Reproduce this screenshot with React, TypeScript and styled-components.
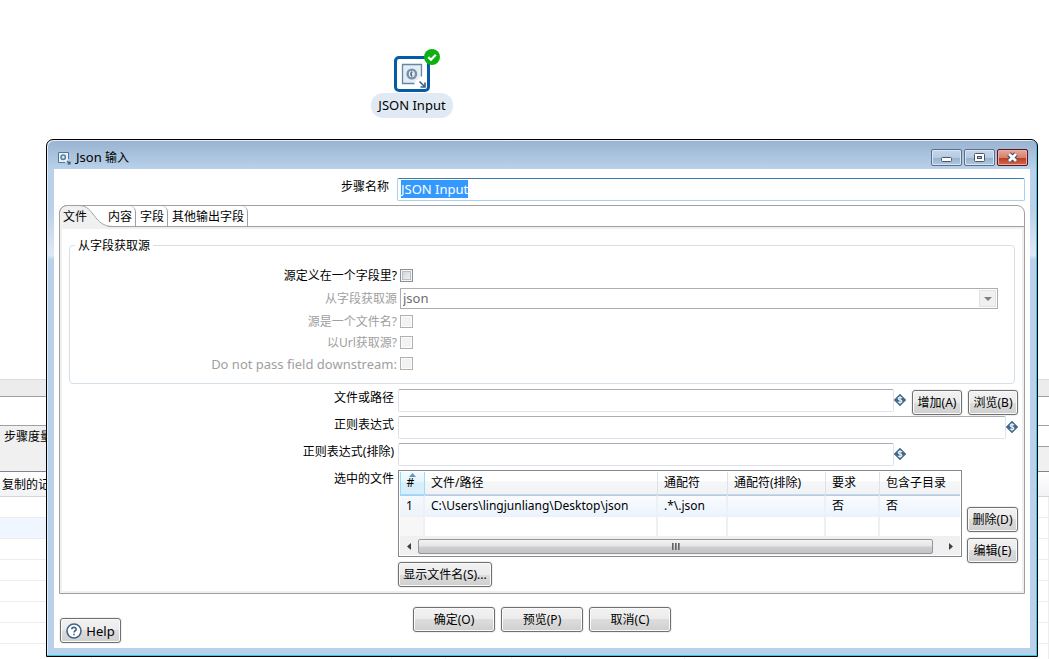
import React, { useEffect, useRef } from "react";
import styled, { createGlobalStyle, css } from "styled-components";

const GlobalStyle = createGlobalStyle`
  *, *::before, *::after { box-sizing: border-box; }
  body {
    margin: 0;
    background: #fff;
    color: #000;
    font-family: "Noto Sans", "Noto Sans CJK SC", sans-serif;
    font-size: 12px;
    line-height: 18px;
  }
  button, input, select { font: inherit; color: inherit; margin: 0; }
`;

const latin = css`
  font-size: 13px;
`;

const Desktop = styled.div`
  position: relative;
  min-height: 100vh;
  overflow: hidden;
`;

/* ---------- transformation canvas and results pane ---------- */

const Canvas = styled.div`
  position: relative;
  height: 379px;
`;

const StepNode = styled.div`
  position: absolute;
  left: 371px;
  top: 56px;
  width: 82px;
  display: flex;
  flex-direction: column;
  align-items: center;
  gap: 1px;
`;

const StepIcon = styled.div`
  position: relative;
  width: 36px;
  height: 36px;
  border: 3px solid #055ca6;
  border-radius: 5px;
  background: #fff;
  svg { display: block; }
`;

const StepBadge = styled.span`
  position: absolute;
  right: -13px;
  top: -10px;
`;

const StepLabel = styled.div`
  ${latin}
  width: 100%;
  height: 25px;
  line-height: 25px;
  text-align: center;
  white-space: nowrap;
  border-radius: 12px;
  background: #e1eaf4;
`;

const ResultsBar = styled.div`
  height: 18px;
  background: #ececec;
  border-top: 1px solid #dcdcdc;
  border-bottom: 1px solid #a0a0a0;
`;

const ResultsGap = styled.div`
  height: 28px;
`;

const MetricTabs = styled.div`
  display: flex;
  height: 47px;
  border-top: 1px solid #a0a0a0;
  border-bottom: 1px solid #83838f;
`;

const MetricTab = styled.div`
  width: 60px;
  padding: 2px 4px;
  background: #f0f0f0;
  white-space: nowrap;
`;

const MetricRest = styled.div`
  flex: 1;
  margin-top: 20px;
  background: #f0f0f0;
  border-top: 1px solid #a0a0a0;
`;

const MetricTable = styled.table`
  width: 100%;
  table-layout: fixed;
  border-collapse: separate;
  border-spacing: 0;
  th {
    height: 25px;
    padding: 1px 2px 0;
    text-align: left;
    font-weight: 400;
    white-space: nowrap;
    background: linear-gradient(#fff, #f2f3f5);
    border-bottom: 1px solid #d5d5d5;
  }
  td {
    height: 21px;
    padding: 0;
    border-bottom: 1px solid #ededed;
    border-right: 1px solid #ededed;
  }
  tr:nth-child(2) td:not(:last-child) { background: #eff6ff; }
`;

/* ---------- dialog window ---------- */

const Window = styled.section`
  position: absolute;
  left: 46px;
  right: 11px;
  top: 139px;
  border: 1px solid #000;
  border-radius: 7px 7px 0 0;
  box-shadow: inset -1px -1px 0 #2fc8e6, inset 1px 1px 0 #e3edf7;
  padding: 0 7px 8px;
  background: linear-gradient(
    #98b3d0 0, #b9d1ea 29px, #b9d1ea 70px, #dfe9f5 115px, #b9d1ea 120px, #b9d1ea 100%
  );
`;

const TitleBar = styled.header`
  display: flex;
  align-items: center;
  height: 29px;
  padding: 0 2px 0 3px;
`;

const Title = styled.h1`
  ${latin}
  flex: 1;
  margin: 0 0 0 5px;
  font-weight: 400;
  padding-top: 6px;
  span { font-size: 12px; }
`;

const TitleIcon = styled.span`
  display: flex;
  padding-top: 6px;
`;

const WindowControls = styled.div`
  display: flex;
  gap: 2px;
  padding-top: 6px;
`;

const ControlButton = styled.button<{ $close?: boolean }>`
  display: flex;
  align-items: center;
  justify-content: center;
  width: 31px;
  height: 17px;
  padding: 0;
  border: 1px solid ${p => (p.$close ? "#5a1420" : "#5d6f87")};
  border-radius: 2px;
  box-shadow: inset 0 0 0 1px ${p => (p.$close ? "#e9aea3" : "#d8e5f3")};
  background: ${p =>
    p.$close
      ? "linear-gradient(#e5a99c 0, #d6806f 50%, #bb3a20 50%, #cf6a50 100%)"
      : "linear-gradient(#c3d5e9 0, #b6cbe3 50%, #95b0cc 50%, #b0c8e0 100%)"};
`;

const Client = styled.div`
  background: #fff;
`;

const NameRow = styled.div`
  display: flex;
  align-items: flex-start;
  padding: 9px 5px 4px 0;
`;

const NameLabel = styled.label`
  width: 335px;
  margin-right: 8px;
  text-align: right;
`;

const TextField = styled.input`
  ${latin}
  flex: 1;
  min-width: 0;
  height: 23px;
  padding: 0 3px;
  border: 1px solid #dfe2ea;
  border-top-color: #abadb3;
  border-radius: 2px;
  outline: none;
  background: #fff;
`;

const NameField = styled(TextField)`
  padding-bottom: 1px;
  border-color: #a9d0ec;
  border-top-color: #3d7bad;
  &::selection { background: #3399ff; color: #fff; }
`;

const Folder = styled.div`
  margin: 0 5px;
  border: 1px solid #a0a0a0;
  border-radius: 8px 8px 0 0;
`;

const TabStrip = styled.div`
  position: relative;
  display: flex;
  height: 21px;
  border-bottom: 1px solid #a0a0a0;
`;

const ActiveTabShape = styled.svg`
  position: absolute;
  left: -1px;
  top: -1px;
`;

const Tab = styled.button<{ $active?: boolean }>`
  position: relative;
  height: 20px;
  padding: ${p => (p.$active ? "1px 17px 0 3px" : "1px 3px 0 4px")};
  border: 0;
  border-right: ${p => (p.$active ? "0" : "1px solid #a0a0a0")};
  border-top-right-radius: ${p => (p.$active ? "0" : "6px")};
  background: none;
  line-height: 20px;
  white-space: nowrap;
`;

const Panel = styled.div`
  border: 2px solid #f0f0f0;
  padding: 6px 4px 4px 7px;
`;

const Group = styled.fieldset`
  margin: 0 3px 5px 0;
  padding: 10px 16px 9px 0;
  border: 1px solid #d5dfe8;
  border-radius: 4px;
  min-width: 0;
  legend {
    margin-left: 5px;
    padding: 2px 3px 0;
  }
`;

const SourceRow = styled.div<{ $disabled?: boolean; $gap?: boolean }>`
  display: flex;
  align-items: center;
  gap: 3px;
  height: 21px;
  margin-bottom: ${p => (p.$gap ? "2px" : "0")};
  color: ${p => (p.$disabled ? "#a0a0a0" : "#000")};
`;

const SourceLabel = styled.label<{ $latin?: boolean }>`
  ${p => p.$latin && latin}
  width: 327px;
  text-align: right;
  white-space: nowrap;
`;

const CheckBox = styled.input.attrs({ type: "checkbox" })`
  appearance: none;
  width: 13px;
  height: 13px;
  border: 1px solid #8e8f8f;
  box-shadow: inset 0 0 0 1px #f4f4f4, inset 0 0 0 2px #b9bfc8;
  background: linear-gradient(135deg, #cbcfd5, #f6f6f6);
  &:disabled {
    border-color: #b1b1b1;
    box-shadow: inset 0 0 0 1px #fbfbfb;
    background: #f2f2f2;
  }
`;

const Combo = styled.div`
  display: flex;
  flex: 1;
  height: 21px;
  padding: 1px;
  border: 1px solid #aeadb3;
  background: #fff;
`;

const ComboSelect = styled.select`
  ${latin}
  flex: 1;
  appearance: none;
  padding: 0 1px;
  border: 0;
  background: none;
  line-height: 17px;
  &:disabled { color: #6d6d6d; opacity: 1; }
`;

const ComboArrow = styled.span`
  display: flex;
  align-items: center;
  justify-content: center;
  width: 17px;
  background: #f0f0f0;
  border: 1px solid #e2e2e2;
`;

const FieldRow = styled.div`
  display: flex;
  align-items: flex-start;
  min-height: 27px;
`;

const FieldLabel = styled.label`
  width: 325px;
  margin-right: 4px;
  text-align: right;
  white-space: nowrap;
`;

const VariableMark = styled.svg`
  flex: none;
  margin-top: 5px;
`;

const FieldButtons = styled.div`
  display: flex;
  gap: 6px;
  width: 112px;
  padding: 1px 0 0 6px;
`;

const PushButton = styled.button<{ $width: number }>`
  display: flex;
  align-items: center;
  justify-content: center;
  gap: 4px;
  width: ${p => p.$width}px;
  height: 25px;
  padding: 0;
  border: 1px solid #707070;
  border-radius: 3px;
  box-shadow: 0 0 0 1px #f0f0f0, inset 0 0 0 1px #fafafa;
  background: linear-gradient(#f2f2f2 0, #ebebeb 50%, #dddddd 50%, #cfcfcf 100%);
  white-space: nowrap;
`;

const HelpButton = styled(PushButton)`
  ${latin}
`;

const FilesColumn = styled.div`
  flex: 1;
  min-width: 0;
`;

const TableFrame = styled.div`
  height: 87px;
  margin-bottom: 5px;
  padding: 1px;
  border: 1px solid #828790;
`;

const FilesTable = styled.table`
  width: 100%;
  table-layout: fixed;
  border-collapse: separate;
  border-spacing: 0;
  th, td {
    padding: 0 6px;
    text-align: left;
    font-weight: 400;
    white-space: nowrap;
    overflow: hidden;
  }
  th {
    height: 23px;
    background: linear-gradient(#fff 0, #fff 40%, #f5f6f8 45%, #f1f2f4 100%);
    border-right: 1px solid #e0e2e6;
    border-bottom: 1px solid #d5d5d5;
  }
  td {
    border-right: 2px solid #edf0f5;
    border-bottom: 1px solid #f0f0f0;
  }
  th:last-child, td:last-child { border-right: 0; }
`;

const SortHeader = styled.th`
  && {
    position: relative;
    text-align: center;
    padding: 0 4px 0 0;
    background: linear-gradient(#f2fbff 0, #e6f6fd 45%, #d6eefa 50%, #d9f0fb 100%);
    border: 1px solid #9bdcf7;
    border-top: 0;
  }
  svg { position: absolute; left: 8px; top: 1px; }
`;

const FileRow = styled.tr<{ $selected?: boolean }>`
  td {
    height: ${p => (p.$selected ? "22px" : "20px")};
    ${p =>
      p.$selected &&
      css`
        border-top: 1px solid #a9cdf5;
        background: linear-gradient(#fafcff, #eaf3fd);
      `}
  }
  td:first-child {
    padding: 0 6px;
    background: ${p => (p.$selected ? "linear-gradient(#f6f9fd, #edf3fa)" : "#f7f7f7")};
  }
`;

const ScrollBar = styled.div`
  display: flex;
  align-items: center;
  height: 18px;
  background: #f0f0f0;
`;

const ScrollArrow = styled.span<{ $width: number }>`
  display: flex;
  justify-content: center;
  width: ${p => p.$width}px;
`;

const ScrollThumb = styled.div`
  display: flex;
  align-items: center;
  justify-content: center;
  gap: 1px;
  flex: 1;
  height: 15px;
  margin-right: 9px;
  border: 1px solid #979797;
  border-radius: 2px;
  background: linear-gradient(#f3f3f3 0, #e4e4e6 48%, #cfcfd2 52%, #c3c3c8 100%);
  i {
    width: 2px;
    height: 7px;
    background: linear-gradient(90deg, #4e4e52, #a5a5aa);
  }
`;

const SideButtons = styled.div`
  display: flex;
  flex-direction: column;
  gap: 6px;
  padding: 37px 0 0 5px;
`;

const Footer = styled.footer`
  display: grid;
  grid-template-columns: 1fr auto 1fr;
  padding: 13px 6px 5px;
`;

const HelpCell = styled.div`
  padding-top: 11px;
`;

const Actions = styled.div`
  display: flex;
  align-items: flex-start;
  gap: 6px;
`;

/* ---------- drawings ---------- */

const JsonGlyph = () => (
  <svg width="30" height="30" viewBox="0 0 30 30" fill="none" aria-hidden="true">
    <path d="M6 6H24V17L17 24H6Z" fill="#e3edf6" />
    <path d="M24.5 17.5V5.5H5.5V24.5H17.5" stroke="#6486a3" strokeWidth="1.3" />
    <ellipse cx="14.8" cy="15" rx="4.2" ry="4.4" stroke="#7b90a6" strokeWidth="2.4" />
    <path d="M15.2 12.6c-1.6 1.2-1.6 3.6 0 4.8" stroke="#4e6a86" strokeWidth="1.6" />
    <path d="M22.5 22.5l5 5M28 23.5V28H23.5" stroke="#3f6280" strokeWidth="1.6" />
  </svg>
);

const JsonGlyphSmall = () => (
  <svg width="14" height="14" viewBox="0 0 14 14" fill="none" aria-hidden="true">
    <rect x="1" y="1" width="10" height="10" fill="#eaf2f9" />
    <path d="M11.5 8V1.5H1.5V11.5H8" stroke="#4f7696" />
    <circle cx="6.2" cy="6.2" r="2.2" fill="#dbe6f0" stroke="#5d7c98" strokeWidth="1.5" />
    <path d="M10 10L13 13M13 10.5V13H10.5" stroke="#3a6080" strokeWidth="1.2" />
  </svg>
);

const VariableIcon = () => (
  <VariableMark width="12" height="12" viewBox="0 0 12 12" aria-hidden="true">
    <path d="M6 0L12 6L6 12L0 6Z" fill="#41698c" stroke="#41698c" strokeWidth=".5" />
    <path
      d="M8 4.2C7.4 3.1 4.2 2.9 4.2 4.6C4.2 6.3 7.9 5.6 7.9 7.4C7.9 9.1 4.6 8.9 3.9 7.8M6 2V10"
      fill="none"
      stroke="#e6eef5"
      strokeWidth="1.2"
    />
  </VariableMark>
);

const columns: [string, number | undefined][] = [
  ["文件/路径", undefined],
  ["通配符", 70],
  ["通配符(排除)", 98],
  ["要求", 54],
  ["包含子目录", 80],
];

const metricColumns = [92, 300, 54, 66, 54, 119];

export default function App() {
  const nameRef = useRef<HTMLInputElement>(null);

  useEffect(() => {
    nameRef.current?.focus();
    nameRef.current?.select();
  }, []);

  return (
    <Desktop lang="zh-CN">
      <GlobalStyle />

      <Canvas>
        <StepNode>
          <StepIcon>
            <JsonGlyph />
            <StepBadge>
              <svg width="16" height="16" viewBox="0 0 16 16" aria-hidden="true">
                <circle cx="8" cy="8" r="8" fill="#0cb010" />
                <path d="M4.2 8.1L7 10.7L11.8 5.7" fill="none" stroke="#fff" strokeWidth="2.2" />
              </svg>
            </StepBadge>
          </StepIcon>
          <StepLabel>JSON Input</StepLabel>
        </StepNode>
      </Canvas>

      <ResultsBar />
      <ResultsGap />
      <MetricTabs>
        <MetricTab>步骤度量</MetricTab>
        <MetricRest />
      </MetricTabs>
      <MetricTable>
        <colgroup>
          {metricColumns.map((w, i) => (
            <col key={i} style={{ width: w }} />
          ))}
          <col />
        </colgroup>
        <thead>
          <tr>
            <th>复制的记</th>
            <th colSpan={6} />
          </tr>
        </thead>
        <tbody>
          {Array.from({ length: 8 }, (_, r) => (
            <tr key={r}>
              {Array.from({ length: 7 }, (_, c) => (
                <td key={c} />
              ))}
            </tr>
          ))}
        </tbody>
      </MetricTable>

      <Window role="dialog" aria-labelledby="dialog-title">
        <TitleBar>
          <TitleIcon>
            <JsonGlyphSmall />
          </TitleIcon>
          <Title id="dialog-title">
            Json <span>输入</span>
          </Title>
          <WindowControls>
            <ControlButton type="button">
              <svg width="13" height="13" viewBox="0 0 13 13" aria-hidden="true">
                <rect x="1.5" y="6.5" width="10" height="4" rx="1" fill="#fff" stroke="#4c5565" />
              </svg>
            </ControlButton>
            <ControlButton type="button">
              <svg width="11" height="11" viewBox="0 0 11 11" aria-hidden="true">
                <rect x=".5" y="1.5" width="10" height="8" rx="1" fill="#fff" stroke="#4c5565" />
                <rect x="3.5" y="4.5" width="4" height="2" fill="#a9bfd8" stroke="#4c5565" />
              </svg>
            </ControlButton>
            <ControlButton type="button" $close>
              <svg width="13" height="11" viewBox="0 0 13 11" aria-hidden="true">
                <path d="M3 2L10 9M10 2L3 9" stroke="#4c4a5a" strokeWidth="5" />
                <path d="M3 2L10 9M10 2L3 9" stroke="#fff" strokeWidth="2.8" />
              </svg>
            </ControlButton>
          </WindowControls>
        </TitleBar>

        <Client>
          <NameRow>
            <NameLabel htmlFor="step-name">步骤名称</NameLabel>
            <NameField id="step-name" ref={nameRef} defaultValue="JSON Input" />
          </NameRow>

          <Folder>
            <TabStrip role="tablist">
              <ActiveTabShape width="56" height="22" viewBox="0 0 56 22" aria-hidden="true">
                <path d="M1 22V8C1 4 4 1 8 1H20C36 1 34 22 54 22Z" fill="#f0f0f0" />
                <path
                  d="M.5 22V8.5C.5 4 4 .5 8.5 .5H20C36 .5 34 21.5 54 21.5"
                  fill="none"
                  stroke="#a0a0a0"
                />
              </ActiveTabShape>
              <Tab type="button" role="tab" aria-selected="true" $active>文件</Tab>
              <Tab type="button" role="tab">内容</Tab>
              <Tab type="button" role="tab">字段</Tab>
              <Tab type="button" role="tab">其他输出字段</Tab>
            </TabStrip>

            <Panel role="tabpanel">
              <Group>
                <legend>从字段获取源</legend>
                <SourceRow $gap>
                  <SourceLabel htmlFor="in-field">源定义在一个字段里?</SourceLabel>
                  <CheckBox id="in-field" />
                </SourceRow>
                <SourceRow $disabled $gap>
                  <SourceLabel htmlFor="source-field">从字段获取源</SourceLabel>
                  <Combo>
                    <ComboSelect id="source-field" disabled defaultValue="json">
                      <option>json</option>
                    </ComboSelect>
                    <ComboArrow>
                      <svg width="8" height="4" viewBox="0 0 8 4" aria-hidden="true">
                        <path d="M0 0H8L4 4Z" fill="#808080" />
                      </svg>
                    </ComboArrow>
                  </Combo>
                </SourceRow>
                <SourceRow $disabled>
                  <SourceLabel htmlFor="is-file">源是一个文件名?</SourceLabel>
                  <CheckBox id="is-file" disabled />
                </SourceRow>
                <SourceRow $disabled>
                  <SourceLabel htmlFor="is-url">以Url获取源?</SourceLabel>
                  <CheckBox id="is-url" disabled />
                </SourceRow>
                <SourceRow $disabled>
                  <SourceLabel htmlFor="no-pass" $latin>Do not pass field downstream:</SourceLabel>
                  <CheckBox id="no-pass" disabled />
                </SourceRow>
              </Group>

              <FieldRow>
                <FieldLabel htmlFor="path">文件或路径</FieldLabel>
                <TextField id="path" />
                <VariableIcon />
                <FieldButtons>
                  <PushButton type="button" $width={50}>增加(A)</PushButton>
                  <PushButton type="button" $width={50}>浏览(B)</PushButton>
                </FieldButtons>
              </FieldRow>
              <FieldRow>
                <FieldLabel htmlFor="regex">正则表达式</FieldLabel>
                <TextField id="regex" />
                <VariableIcon />
              </FieldRow>
              <FieldRow>
                <FieldLabel htmlFor="regex-exclude">正则表达式(排除)</FieldLabel>
                <TextField id="regex-exclude" />
                <VariableIcon />
                <FieldButtons />
              </FieldRow>
              <FieldRow>
                <FieldLabel as="span" id="files-label">选中的文件</FieldLabel>
                <FilesColumn>
                  <TableFrame>
                    <FilesTable aria-labelledby="files-label">
                      <colgroup>
                        <col style={{ width: 25 }} />
                        {columns.map(([name, w]) => (
                          <col key={name} style={{ width: w }} />
                        ))}
                      </colgroup>
                      <thead>
                        <tr>
                          <SortHeader>
                            <svg width="7" height="4" viewBox="0 0 7 4" aria-hidden="true">
                              <path d="M0 4L3.5 0L7 4Z" fill="#5f9bb8" />
                            </svg>
                            #
                          </SortHeader>
                          {columns.map(([name]) => (
                            <th key={name}>{name}</th>
                          ))}
                        </tr>
                      </thead>
                      <tbody>
                        <FileRow $selected>
                          <td>1</td>
                          <td>C:\Users\lingjunliang\Desktop\json</td>
                          <td>.*\.json</td>
                          <td />
                          <td>否</td>
                          <td>否</td>
                        </FileRow>
                        <FileRow>
                          <td /><td /><td /><td /><td /><td />
                        </FileRow>
                      </tbody>
                    </FilesTable>
                    <ScrollBar>
                      <ScrollArrow $width={18}>
                        <svg width="4" height="7" viewBox="0 0 4 7" aria-hidden="true">
                          <path d="M4 0V7L0 3.5Z" fill="#404040" />
                        </svg>
                      </ScrollArrow>
                      <ScrollThumb><i /><i /><i /></ScrollThumb>
                      <ScrollArrow $width={18}>
                        <svg width="4" height="7" viewBox="0 0 4 7" aria-hidden="true">
                          <path d="M0 0V7L4 3.5Z" fill="#404040" />
                        </svg>
                      </ScrollArrow>
                    </ScrollBar>
                  </TableFrame>
                  <PushButton type="button" $width={94}>显示文件名(S)...</PushButton>
                </FilesColumn>
                <SideButtons>
                  <PushButton type="button" $width={51}>删除(D)</PushButton>
                  <PushButton type="button" $width={51}>编辑(E)</PushButton>
                </SideButtons>
              </FieldRow>
            </Panel>
          </Folder>

          <Footer>
            <HelpCell>
              <HelpButton type="button" $width={61}>
                <svg width="16" height="16" viewBox="0 0 16 16" fill="none" aria-hidden="true">
                  <circle cx="8" cy="8" r="7" fill="#fff" stroke="#3f6587" strokeWidth="1.6" />
                  <path
                    d="M5.8 6.3C5.8 3.7 10.2 3.8 10.2 6.2C10.2 7.8 8 7.7 8 9.6M8 10.8V12.3"
                    stroke="#3f6587"
                    strokeWidth="1.6"
                  />
                </svg>
                Help
              </HelpButton>
            </HelpCell>
            <Actions>
              <PushButton type="button" $width={82}>确定(O)</PushButton>
              <PushButton type="button" $width={82}>预览(P)</PushButton>
              <PushButton type="button" $width={82}>取消(C)</PushButton>
            </Actions>
          </Footer>
        </Client>
      </Window>
    </Desktop>
  );
}
